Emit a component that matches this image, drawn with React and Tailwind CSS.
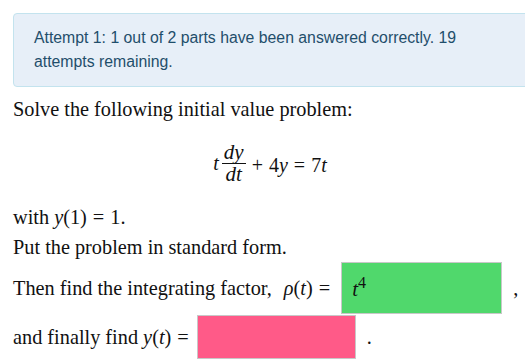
import React from 'react';

const serif = { fontFamily: '"Liberation Serif", "DejaVu Serif", serif' };

function M({ children }) {
  // math italic letter
  return <span className="italic">{children}</span>;
}

function Eq() {
  return <span className="mx-[6px]">=</span>;
}

export default function App() {
  return (
    <div className="w-[525px] h-[362px] overflow-hidden bg-white">
      <div className="ml-[13px] w-[516px] pt-[13px]">
        {/* status alert */}
        <div
          className="rounded-[4px] border border-[#c3e3ee] bg-[#e7eff8] px-[20px] py-[12px] text-[15.8px] leading-[24px] text-[#1f4e6b]"
          style={{ fontFamily: '"Liberation Sans", Arial, sans-serif' }}
        >
          Attempt 1: 1 out of 2 parts have been answered correctly. 19
          <br />
          attempts remaining.
        </div>

        <div className="text-[20.3px] leading-[30px] text-[#111]" style={serif}>
          <p className="mt-[7px]">Solve the following initial value problem:</p>

          {/* equation */}
          <div className="flex h-[78px] items-center justify-center">
            <div className="-ml-[2px] flex items-center text-[20px]">
              <M>t</M>
              <div className="ml-[3px] flex flex-col items-center text-[21px] leading-[21px]">
                <span className="px-[2px] italic">dy</span>
                <span className="h-[1px] w-full bg-[#111]" />
                <span className="px-[2px] italic">dt</span>
              </div>
              <span className="ml-[6px] mt-[4px]">
                +<span className="ml-[6px]">4</span>
                <M>y</M>
                <Eq />7<M>t</M>
              </span>
            </div>
          </div>

          <p>
            with <M>y</M>(1)
            <Eq />
            1.
          </p>
          <p>Put the problem in standard form.</p>

          <div className="flex h-[52px] items-center">
            <span>
              Then find the integrating factor,
              <span className="ml-[12px]">
                <M>ρ</M>(<M>t</M>)
                <Eq />
              </span>
            </span>
            <div className="ml-[5px] h-[52px] w-[161px] border border-[#c8c8c8] bg-[#50d86c] pl-[10px] pt-[14px] text-[21px] leading-[24px] text-[#111]">
              <M>t</M>
              <sup className="text-[16px]">4</sup>
            </div>
            <span className="ml-[11px]">,</span>
          </div>

          <div className="mt-[1px] flex h-[44px] items-center">
            <span>
              and finally find <M>y</M>(<M>t</M>)
              <Eq />
            </span>
            <div className="ml-[2px] h-[44px] w-[159px] border border-[#c8c8c8] bg-[#ff5a88]" />
            <span className="ml-[11px]">.</span>
          </div>
        </div>
      </div>
    </div>
  );
}
